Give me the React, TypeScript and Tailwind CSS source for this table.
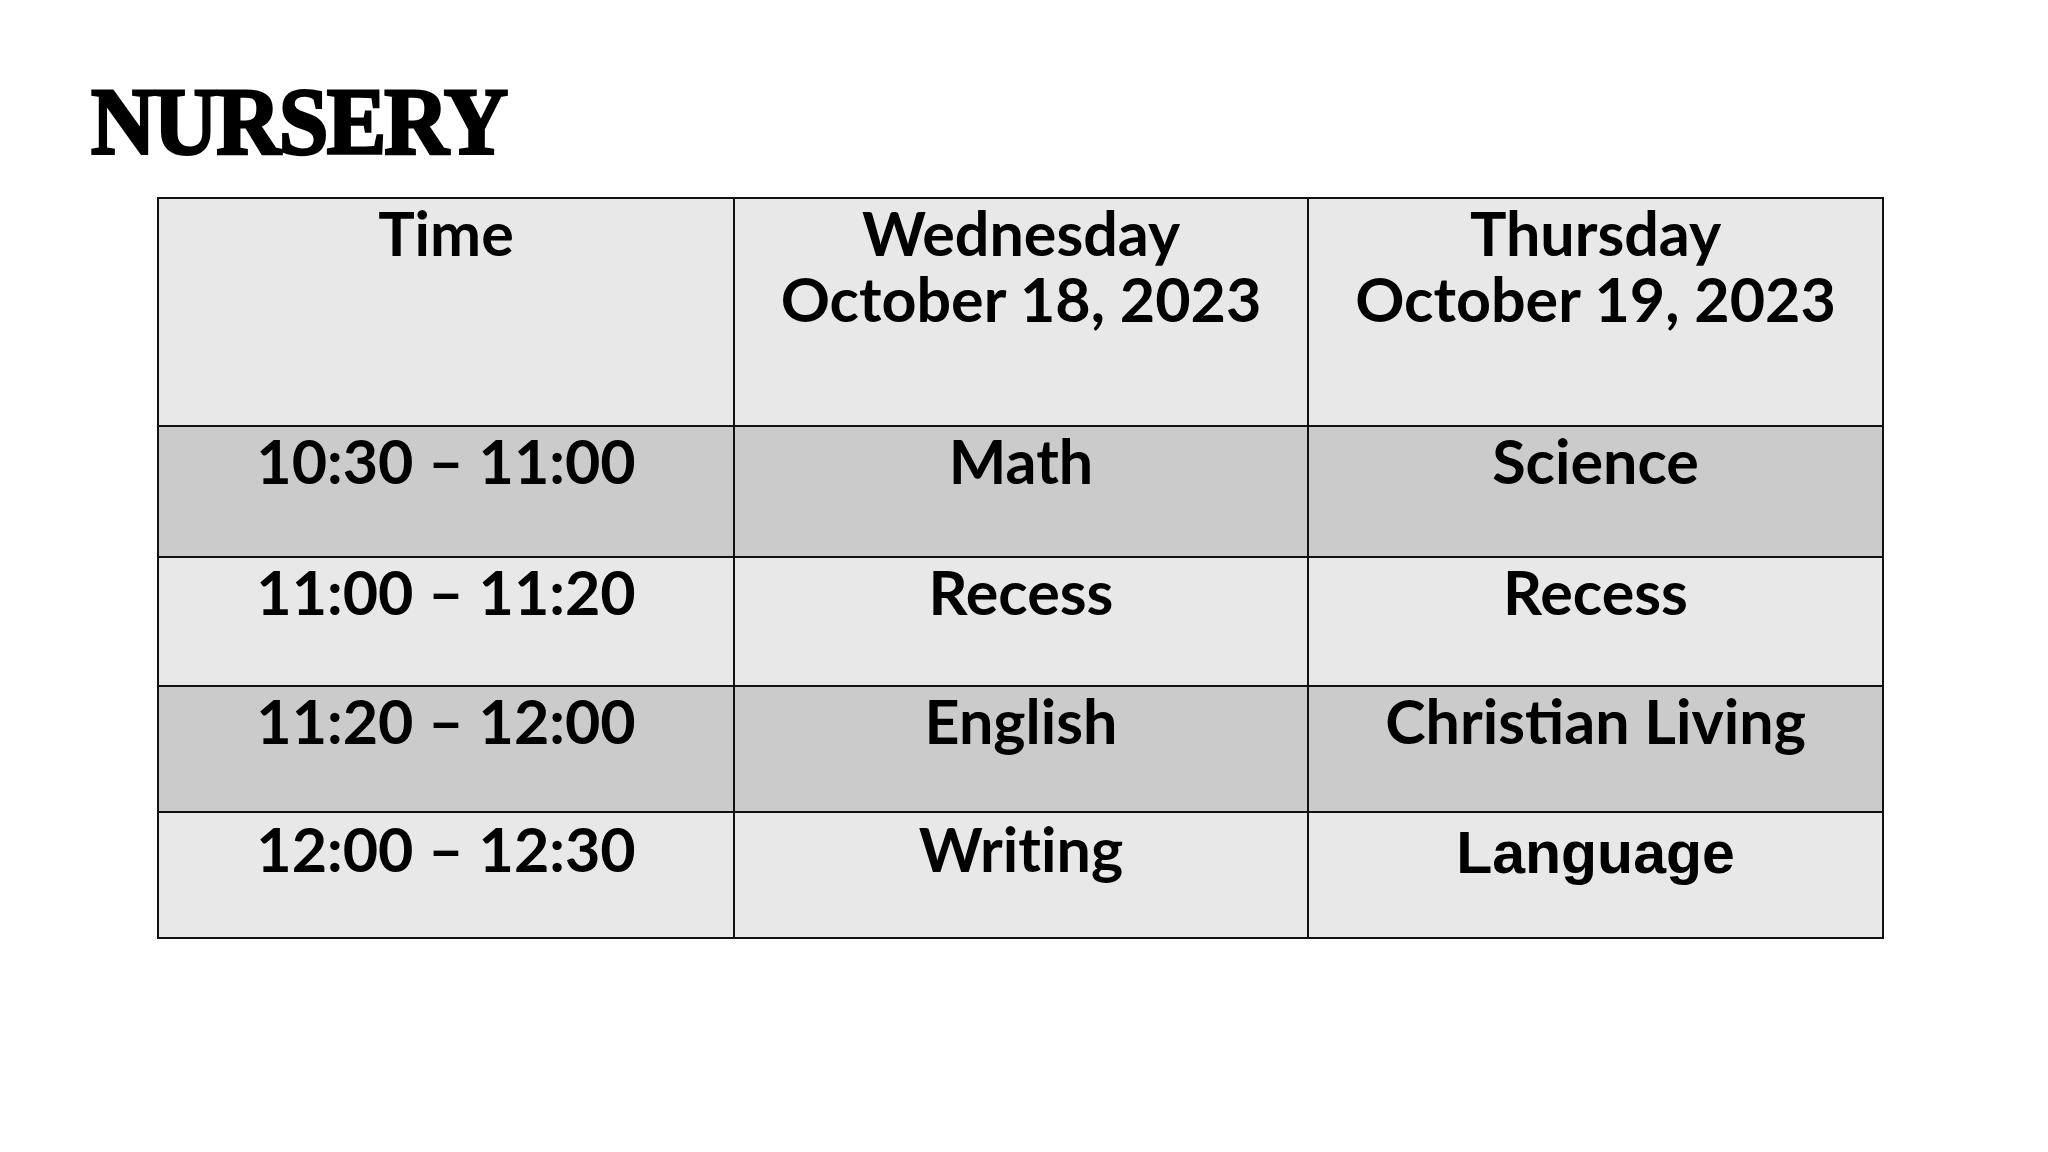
import React from 'react';

type Cell = { text: string[]; arial?: boolean; noLig?: boolean };

// row heights match the slide's grid lines
const ROWS: { h: string; bg: string; pad: string; cells: Cell[] }[] = [
  {
    h: 'h-[228px]',
    bg: 'bg-[#e8e8e8]',
    pad: 'pt-px',
    cells: [
      { text: ['Time'] },
      { text: ['Wednesday', 'October 18, 2023'] },
      { text: ['Thursday', 'October 19, 2023'] },
    ],
  },
  {
    h: 'h-[131px]',
    bg: 'bg-[#cbcbcb]',
    pad: 'pt-px',
    cells: [{ text: ['10:30 – 11:00'] }, { text: ['Math'] }, { text: ['Science'] }],
  },
  {
    h: 'h-[129px]',
    bg: 'bg-[#e8e8e8]',
    pad: 'pt-px',
    cells: [{ text: ['11:00 – 11:20'] }, { text: ['Recess'] }, { text: ['Recess'] }],
  },
  {
    h: 'h-[126px]',
    bg: 'bg-[#cbcbcb]',
    pad: 'pt-px',
    cells: [{ text: ['11:20 – 12:00'] }, { text: ['English'] }, { text: ['Christian Living'] }],
  },
  {
    h: 'h-[126px]',
    bg: 'bg-[#e8e8e8]',
    pad: 'pt-[3px]',
    cells: [
      { text: ['12:00 – 12:30'] },
      { text: ['Writing'], noLig: true },
      { text: ['Language'], arial: true },
    ],
  },
];

export default function App() {
  return (
    <div className="w-[2048px] h-[1152px] bg-white text-black font-['Lato','Carlito',sans-serif] overflow-hidden">
      <div className="pl-[91px] pt-[74px]">
        <h1 className="origin-left scale-x-[0.93] font-['Liberation_Serif','Times_New_Roman',serif] text-[96px] font-bold leading-none tracking-[-2px] [-webkit-text-stroke:3px_black]">
          NURSERY
        </h1>
      </div>

      <div className="ml-[157px] mt-[27px] grid w-[1727px] grid-cols-[576px_574px_575px] border-l-2 border-t-2 border-[#111]">
        {ROWS.map((row, ri) =>
          row.cells.map((cell, ci) => (
            <div
              key={`${ri}-${ci}`}
              className={`${row.h} ${row.bg} ${row.pad} border-b-2 border-r-2 border-[#111] text-center`}
            >
              {cell.arial ? (
                <div className="pt-[4px] font-['Liberation_Sans','Arial',sans-serif] text-[59px] font-bold leading-[66px]">
                  {cell.text[0]}
                </div>
              ) : (
                <div
                  className={`text-[61px] font-bold leading-[66px] ${cell.noLig ? '[font-variant-ligatures:none]' : ''}`}
                >
                  {cell.text.map((line, li) => (
                    <React.Fragment key={line}>
                      {li > 0 && <br />}
                      {line}
                    </React.Fragment>
                  ))}
                </div>
              )}
            </div>
          )),
        )}
      </div>
    </div>
  );
}
